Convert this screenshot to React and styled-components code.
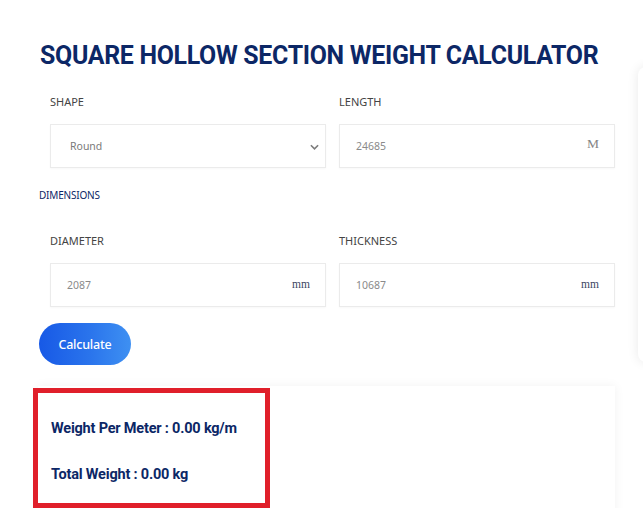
import React from 'react';
import styled, { createGlobalStyle } from 'styled-components';

const GlobalStyle = createGlobalStyle`
  html, body {
    margin: 0;
    padding: 0;
    background: #ffffff;
    overflow: hidden;
  }
`;

export default function App() {
  return (
    <>
      <GlobalStyle />
      <Page>
        <Main>
          <Title>Square Hollow Section Weight Calculator</Title>
          <FieldGrid>
            <Field>
              <Label>Shape</Label>
              <SelectWrap>
                <Select defaultValue="round">
                  <option value="round">Round</option>
                  <option value="square">Square</option>
                </Select>
                <Caret viewBox="0 0 10 6" aria-hidden="true">
                  <path d="M1 1l4 4 4-4" fill="none" stroke="#7d7d7d" strokeWidth="1.8" />
                </Caret>
              </SelectWrap>
            </Field>
            <Field>
              <Label>Length</Label>
              <InputBox>
                <Value>24685</Value>
                <Unit $big>M</Unit>
              </InputBox>
            </Field>
          </FieldGrid>

          <Section>Dimensions</Section>

          <FieldGrid $spaced>
            <Field>
              <Label>Diameter</Label>
              <InputBox>
                <Value>2087</Value>
                <Unit>mm</Unit>
              </InputBox>
            </Field>
            <Field>
              <Label>Thickness</Label>
              <InputBox>
                <Value>10687</Value>
                <Unit>mm</Unit>
              </InputBox>
            </Field>
          </FieldGrid>

          <Button type="button">Calculate</Button>

          <ResultCard>
            <ResultBox>
              <ResultLine>Weight Per Meter : 0.00 kg/m</ResultLine>
              <ResultLine>Total Weight : 0.00 kg</ResultLine>
            </ResultBox>
          </ResultCard>
        </Main>
        <Side />
      </Page>
    </>
  );
}

const Page = styled.div`
  display: flex;
  align-items: flex-start;
  width: 643px;
  height: 508px;
  overflow: hidden;
  padding-left: 38px;
  box-sizing: border-box;
`;
const Main = styled.div`
  width: 577px;
  flex-shrink: 0;
  display: flex;
  flex-direction: column;
  padding-top: 41px;
`;
const Title = styled.h1`
  margin: 0 0 0 2px;
  font-family: Roboto, "Liberation Sans", sans-serif;
  font-weight: 700;
  font-size: 24.9px;
  line-height: 30px;
  letter-spacing: -0.3px;
  text-transform: uppercase;
  color: #0c2766;
  white-space: nowrap;
`;
const FieldGrid = styled.div`
  display: grid;
  grid-template-columns: 276px 276px;
  column-gap: 13px;
  margin-left: 12px;
  margin-top: ${(p) => (p.$spaced ? '8px' : '0')};
`;
const Field = styled.div`
  display: flex;
  flex-direction: column;
`;
const Label = styled.div`
  font-family: "Noto Sans", "Open Sans", sans-serif;
  font-size: 11px;
  line-height: 14px;
  text-transform: uppercase;
  color: #444444;
  margin-top: 24px;
  margin-bottom: 15px;
`;
const boxStyles = `
  height: 44px;
  box-sizing: border-box;
  border: 1px solid #ebebeb;
  background: #fff;
  box-shadow: 0 1px 2px rgba(0, 0, 0, 0.03);
`;
const SelectWrap = styled.div`
  position: relative;
  ${boxStyles}
`;
const Select = styled.select`
  appearance: none;
  width: 100%;
  height: 100%;
  border: none;
  outline: none;
  background: transparent;
  padding: 0 0 0 19px;
  font-family: "Noto Sans", "Open Sans", sans-serif;
  font-size: 10.5px;
  color: #7a7a7a;
`;
const Caret = styled.svg`
  position: absolute;
  right: 6px;
  top: 19px;
  width: 9px;
  height: 6px;
  pointer-events: none;
`;
const InputBox = styled.div`
  ${boxStyles}
  display: flex;
  align-items: center;
  justify-content: space-between;
  padding: 0 15px 0 16px;
`;
const Value = styled.span`
  font-family: "Noto Sans", "Open Sans", sans-serif;
  font-size: 10.5px;
  color: #8a8a8a;
`;
const Unit = styled.span`
  font-family: "Liberation Serif", "DejaVu Serif", serif;
  font-weight: 400;
  font-size: ${(p) => (p.$big ? '13.5px' : '11.5px')};
  color: ${(p) => (p.$big ? '#858585' : '#3a4562')};
  margin-top: ${(p) => (p.$big ? '-4px' : '-2px')};
`;
const Section = styled.div`
  margin-top: 20px;
  margin-left: 1px;
  font-family: "Noto Sans", "Open Sans", sans-serif;
  font-size: 10px;
  line-height: 14px;
  text-transform: uppercase;
  color: #0c2766;
  letter-spacing: -0.2px;
`;
const Button = styled.button`
  align-self: flex-start;
  margin-top: 16px;
  margin-left: 1px;
  width: 92px;
  height: 42px;
  border: none;
  border-radius: 21px;
  background: linear-gradient(90deg, #1759e6 0%, #2a74ec 55%, #3e90f2 100%);
  color: #fff;
  font-family: "Noto Sans", "Open Sans", sans-serif;
  font-weight: 500;
  font-size: 12.5px;
  letter-spacing: -0.2px;
  cursor: pointer;
`;
const ResultCard = styled.div`
  margin-top: 21px;
  width: 577px;
  height: 140px;
  background: #fff;
  box-shadow: 0 0 10px rgba(0, 0, 0, 0.06);
  padding-top: 2px;
  box-sizing: border-box;
`;
const ResultBox = styled.div`
  margin-left: -5px;
  width: 237px;
  height: 120px;
  box-sizing: border-box;
  border: 5px solid #e01f2a;
  padding: 27px 0 0 13px;
  display: flex;
  flex-direction: column;
  gap: 28px;
`;
const ResultLine = styled.div`
  font-family: Roboto, "Liberation Sans", sans-serif;
  font-weight: 700;
  font-size: 14.5px;
  line-height: 18px;
  color: #0c2766;
  letter-spacing: -0.2px;
`;
const Side = styled.div`
  margin-left: 23px;
  margin-top: 67px;
  flex-shrink: 0;
  width: 300px;
  height: 295px;
  border-radius: 8px;
  background: #fff;
  box-shadow: 0 0 12px rgba(0, 0, 0, 0.09);
`;
